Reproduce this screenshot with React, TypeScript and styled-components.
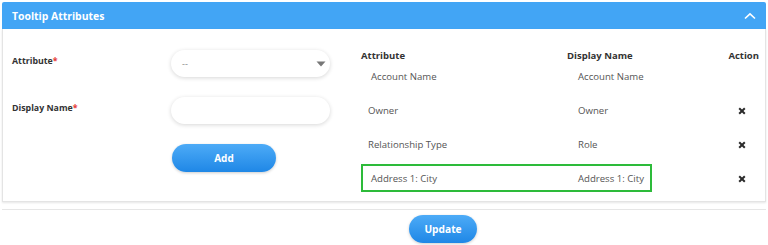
import React from "react";
import styled, { createGlobalStyle } from "styled-components";

const Global = createGlobalStyle`
  html, body { margin: 0; padding: 0; background: #ffffff; }
  body { font-family: "Open Sans", "Noto Sans", Arial, sans-serif; }
  * { box-sizing: border-box; }
`;

const Page = styled.div`
  width: 768px;
  height: 245px;
  overflow: hidden;
`;

const Panel = styled.section`
  margin: 2px 2px 0;
`;

const PanelHeader = styled.header`
  height: 27px;
  background: #42a5f5;
  border-radius: 2px 2px 0 0;
  display: flex;
  align-items: center;
  justify-content: space-between;
  padding: 0 10px 0 10px;
`;

const Title = styled.h2`
  margin: 0;
  font-size: 10.4px;
  font-weight: 700;
  color: #ffffff;
  line-height: 14px;
`;

const PanelBody = styled.div`
  border: 1px solid #e4e4e4;
  border-top: none;
  box-shadow: 0 1px 2px rgba(0, 0, 0, 0.1);
  padding: 21px 6px 4px 9px;
  display: flex;
  gap: 31px;
`;

const Form = styled.div`
  display: grid;
  grid-template-columns: 159px 159px;
  grid-auto-rows: auto;
  row-gap: 20px;
  align-content: start;
`;

const Label = styled.label`
  font-size: 8.8px;
  font-weight: 700;
  color: #333333;
  line-height: 12px;
  padding-top: 5px;
`;

const Req = styled.span`
  color: #e53935;
`;

const Field = styled.div`
  height: 27px;
  border-radius: 14px;
  background: #ffffff;
  box-shadow: 0 1px 4px rgba(0, 0, 0, 0.16);
  display: flex;
  align-items: center;
  justify-content: space-between;
  padding: 0 4px 0 11px;
  font-size: 9px;
  color: #8a8a8a;
`;

const PillButton = styled.button<{ $w: number; $size: number }>`
  width: ${(p) => p.$w}px;
  height: 28px;
  border: none;
  border-radius: 14px;
  background: linear-gradient(to bottom, #4dabf7, #1f87e6);
  box-shadow: 0 1px 3px rgba(0, 0, 0, 0.2);
  color: #ffffff;
  font-family: "Open Sans", Arial, sans-serif;
  font-weight: 700;
  font-size: ${(p) => p.$size}px;
  cursor: pointer;
  padding: 0;
`;

const AddCell = styled.div`
  grid-column: 2;
  padding-left: 1px;
`;

const Table = styled.div`
  flex: 1;
  display: flex;
  flex-direction: column;
`;

const HeadRow = styled.div`
  display: grid;
  grid-template-columns: 206px 1fr auto;
  font-size: 9.5px;
  font-weight: 700;
  color: #333333;
  line-height: 11px;
  height: 11px;
`;

const Row = styled.div`
  display: grid;
  grid-template-columns: 291px 1fr 34px;
  height: 34px;
  align-items: start;
  padding-top: 1px;
`;

const Pair = styled.div<{ $hl?: boolean }>`
  height: 28px;
  display: grid;
  grid-template-columns: 204px 1fr;
  align-items: center;
  border: 2px solid ${(p) => (p.$hl ? "#2dbb3a" : "transparent")};
  font-size: 9.6px;
  color: #555555;
`;

const Cell = styled.div<{ $indent: number }>`
  padding-left: ${(p) => p.$indent}px;
  white-space: nowrap;
`;

const ActionCell = styled.div`
  grid-column: 3;
  height: 28px;
  display: flex;
  align-items: center;
  justify-content: center;
  padding-top: 2px;
`;

const Divider = styled.hr`
  margin: 7px 2px 0;
  border: none;
  border-top: 1px solid #e6e6e6;
  height: 0;
`;

const Footer = styled.div`
  display: flex;
  justify-content: center;
  padding: 5px 0 0 118px;
`;

const Chevron = () => (
  <svg width="12" height="8" viewBox="0 0 12 8">
    <path d="M1 6.5 L6 1.8 L11 6.5" fill="none" stroke="#ffffff" strokeWidth="1.6" />
  </svg>
);

const Caret = () => (
  <svg width="10" height="6" viewBox="0 0 10 6">
    <path d="M0.5 0.5 H9.5 L5 5.5 Z" fill="#777777" />
  </svg>
);

const Cross = () => (
  <svg width="8" height="8" viewBox="0 0 8 8">
    <path d="M1.2 1.2 L6.8 6.8 M6.8 1.2 L1.2 6.8" stroke="#2b2b2b" strokeWidth="2" />
  </svg>
);

type RowData = { attr: string; name: string; indent: number; remove: boolean; hl?: boolean };

const rows: RowData[] = [
  { attr: "Account Name", name: "Account Name", indent: 8, remove: false },
  { attr: "Owner", name: "Owner", indent: 5, remove: true },
  { attr: "Relationship Type", name: "Role", indent: 5, remove: true },
  { attr: "Address 1: City", name: "Address 1: City", indent: 8, remove: true, hl: true },
];

export default function App() {
  return (
    <Page>
      <Global />
      <Panel>
        <PanelHeader>
          <Title>Tooltip Attributes</Title>
          <Chevron />
        </PanelHeader>
        <PanelBody>
          <Form>
            <Label>
              Attribute<Req>*</Req>
            </Label>
            <Field>
              <span>--</span>
              <Caret />
            </Field>
            <Label>
              Display Name<Req>*</Req>
            </Label>
            <Field />
            <AddCell>
              <PillButton $w={104} $size={10}>Add</PillButton>
            </AddCell>
          </Form>
          <Table>
            <HeadRow>
              <span>Attribute</span>
              <span>Display Name</span>
              <span>Action</span>
            </HeadRow>
            {rows.map((r) => (
              <Row key={r.attr}>
                <Pair $hl={r.hl}>
                  <Cell $indent={r.indent}>{r.attr}</Cell>
                  <Cell $indent={11}>{r.name}</Cell>
                </Pair>
                {r.remove && (
                  <ActionCell>
                    <Cross />
                  </ActionCell>
                )}
              </Row>
            ))}
          </Table>
        </PanelBody>
      </Panel>
      <Divider />
      <Footer>
        <PillButton $w={68} $size={10.2}>Update</PillButton>
      </Footer>
    </Page>
  );
}
